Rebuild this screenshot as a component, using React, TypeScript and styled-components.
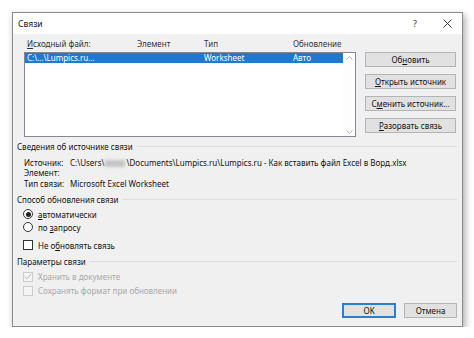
import React from "react";
import styled, { createGlobalStyle } from "styled-components";

const Global = createGlobalStyle`
  html, body { margin: 0; padding: 0; background: #ffffff; }
  body { font-family: "Noto Sans", "Open Sans", sans-serif; font-size: 8px; color: #111111; }
`;

const Page = styled.div`
  padding: 12px 0 0 12px;
`;

const Dialog = styled.div`
  width: 449px;
  height: 313px;
  border: 1px solid #8c8c8c;
  background: #f0f0f0;
  box-shadow: 2px 3px 7px rgba(0, 0, 0, 0.35);
  display: flex;
  flex-direction: column;
`;

const TitleBar = styled.div`
  height: 21px;
  background: #ffffff;
  display: flex;
  align-items: center;
  padding: 0 5px 0 5px;
  gap: 12px;
`;

const Title = styled.div`
  flex: 1;
  font-size: 8.5px;
  color: #111111;
`;

const TitleBtn = styled.div`
  width: 20px;
  font-size: 9px;
  color: #333;
  display: flex;
  justify-content: center;
  align-items: center;
`;

const Content = styled.div`
  flex: 1;
  display: flex;
  flex-direction: column;
  padding: 0 5px 0 4px;
`;

const TopArea = styled.div`
  display: flex;
  gap: 9px;
  height: 103px;
  margin-left: 7px;
`;

const LeftCol = styled.div`
  width: 332px;
  display: flex;
  flex-direction: column;
`;

const Cols = styled.div`
  display: grid;
  grid-template-columns: 110px 67px 89px 1fr;
  align-items: center;
`;

const HeaderRow = styled(Cols)`
  height: 18px;
  padding-left: 3px;
  color: #333;
`;

const ListBox = styled.div`
  height: 85px;
  box-sizing: border-box;
  border: 1px solid #828790;
  background: #ffffff;
  display: flex;
`;

const ListRows = styled.div`
  flex: 1;
`;

const ListRow = styled(Cols)<{ $sel?: boolean }>`
  height: 10px;
  padding-left: 2px;
  background: ${(p) => (p.$sel ? "#1c7ad6" : "transparent")};
  color: ${(p) => (p.$sel ? "#ffffff" : "#111111")};
  line-height: 10px;
  white-space: nowrap;
`;

const ScrollBar = styled.div`
  width: 12px;
  display: flex;
  flex-direction: column;
  justify-content: space-between;
  align-items: center;
  padding: 3px 0 2px;
  background: #fdfdfd;
`;

const RightCol = styled.div`
  width: 91px;
  display: flex;
  flex-direction: column;
  gap: 7px;
  padding-top: 18px;
`;

const Button = styled.div<{ $default?: boolean; $w?: number }>`
  height: 15px;
  width: ${(p) => (p.$w ? `${p.$w}px` : "auto")};
  box-sizing: border-box;
  border: ${(p) => (p.$default ? "2px solid #2a7fd4" : "1px solid #b4b4b4")};
  background: #e1e1e1;
  display: flex;
  align-items: center;
  justify-content: center;
  color: #111111;
  white-space: nowrap;
`;

const U = styled.span`
  text-decoration: underline;
  text-underline-offset: 1px;
`;

const SectionTitle = styled.div<{ $mt: number }>`
  display: flex;
  align-items: center;
  height: 12px;
  margin-top: ${(p) => p.$mt}px;
  color: #111111;
  white-space: nowrap;
  &::after {
    content: "";
    flex: 1;
    height: 1px;
    background: #dcdcdc;
    margin-left: 4px;
  }
`;

const Info = styled.div`
  margin-top: 5px;
  margin-left: 7px;
  display: grid;
  grid-template-columns: 46px 1fr;
  grid-auto-rows: 10.5px;
  align-items: center;
  white-space: nowrap;
`;

const Blur = styled.span`
  display: inline-block;
  width: 20px;
  height: 7px;
  margin: 0 1px;
  vertical-align: middle;
  background: #c4c4c4;
  filter: blur(1.5px);
`;

const OptionRow = styled.div<{ $mt?: number; $h: number; $disabled?: boolean }>`
  display: flex;
  align-items: center;
  gap: 5px;
  height: ${(p) => p.$h}px;
  margin-top: ${(p) => p.$mt ?? 0}px;
  padding-left: 6px;
  color: ${(p) => (p.$disabled ? "#a8a8a8" : "#111111")};
`;

const Radio = styled.span<{ $on?: boolean }>`
  width: 10px;
  height: 10px;
  box-sizing: border-box;
  border: 1px solid #333;
  border-radius: 50%;
  background: #fff;
  display: flex;
  align-items: center;
  justify-content: center;
  &::after {
    content: "";
    width: 5px;
    height: 5px;
    border-radius: 50%;
    background: ${(p) => (p.$on ? "#222" : "transparent")};
  }
`;

const Check = styled.span<{ $disabled?: boolean }>`
  width: 10px;
  height: 10px;
  box-sizing: border-box;
  border: 1px solid ${(p) => (p.$disabled ? "#cccccc" : "#333")};
  background: ${(p) => (p.$disabled ? "#f4f4f4" : "#fff")};
  display: flex;
  align-items: center;
  justify-content: center;
`;

const Footer = styled.div`
  display: flex;
  justify-content: flex-end;
  gap: 8px;
  margin-top: 5px;
`;

const Chevron = ({ up }: { up?: boolean }) => (
  <svg width="7" height="4" viewBox="0 0 7 4">
    <path
      d={up ? "M0.5 3.5 L3.5 0.5 L6.5 3.5" : "M0.5 0.5 L3.5 3.5 L6.5 0.5"}
      fill="none"
      stroke="#b5b5b5"
      strokeWidth="1"
    />
  </svg>
);

export default function App() {
  return (
    <>
      <Global />
      <Page>
        <Dialog>
          <TitleBar>
            <Title>Связи</Title>
            <TitleBtn>?</TitleBtn>
            <TitleBtn>
              <svg width="9" height="9" viewBox="0 0 9 9">
                <path d="M0.5 0.5 L8.5 8.5 M8.5 0.5 L0.5 8.5" stroke="#333" strokeWidth="1" />
              </svg>
            </TitleBtn>
          </TitleBar>
          <Content>
            <TopArea>
              <LeftCol>
                <HeaderRow>
                  <span>
                    <U>И</U>сходный файл:
                  </span>
                  <span>Элемент</span>
                  <span>Тип</span>
                  <span>Обновление</span>
                </HeaderRow>
                <ListBox>
                  <ListRows>
                    <ListRow $sel>
                      <span>C:\...\Lumpics.ru...</span>
                      <span></span>
                      <span>Worksheet</span>
                      <span>Авто</span>
                    </ListRow>
                  </ListRows>
                  <ScrollBar>
                    <Chevron up />
                    <Chevron />
                  </ScrollBar>
                </ListBox>
              </LeftCol>
              <RightCol>
                <Button>
                  Об<U>н</U>овить
                </Button>
                <Button>
                  <U>О</U>ткрыть источник
                </Button>
                <Button>
                  С<U>м</U>енить источник...
                </Button>
                <Button>
                  <U>Р</U>азорвать связь
                </Button>
              </RightCol>
            </TopArea>

            <SectionTitle $mt={3}>Сведения об источнике связи</SectionTitle>
            <Info>
              <span>Источник:</span>
              <span>
                C:\Users\
                <Blur />
                \Documents\Lumpics.ru\Lumpics.ru - Как вставить файл Excel в Ворд.xlsx
              </span>
              <span>Элемент:</span>
              <span></span>
              <span>Тип связи:</span>
              <span>Microsoft Excel Worksheet</span>
            </Info>

            <SectionTitle $mt={5}>Способ обновления связи</SectionTitle>
            <OptionRow $h={13} $mt={2}>
              <Radio $on />
              <span>
                <U>а</U>втоматически
              </span>
            </OptionRow>
            <OptionRow $h={13}>
              <Radio />
              <span>
                по <U>з</U>апросу
              </span>
            </OptionRow>
            <OptionRow $h={13} $mt={5}>
              <Check />
              <span>
                Не о<U>б</U>новлять связь
              </span>
            </OptionRow>

            <SectionTitle $mt={4}>Параметры связи</SectionTitle>
            <OptionRow $h={14} $mt={2} $disabled>
              <Check $disabled>
                <svg width="8" height="7" viewBox="0 0 8 7">
                  <path d="M0.8 3.6 L3 5.8 L7.2 0.8" fill="none" stroke="#b8b8b8" strokeWidth="1" />
                </svg>
              </Check>
              <span>Хранить в документе</span>
            </OptionRow>
            <OptionRow $h={14} $disabled>
              <Check $disabled />
              <span>Сохранять формат при обновлении</span>
            </OptionRow>

            <Footer>
              <Button $default $w={54}>
                OK
              </Button>
              <Button $w={53}>Отмена</Button>
            </Footer>
          </Content>
        </Dialog>
      </Page>
    </>
  );
}
